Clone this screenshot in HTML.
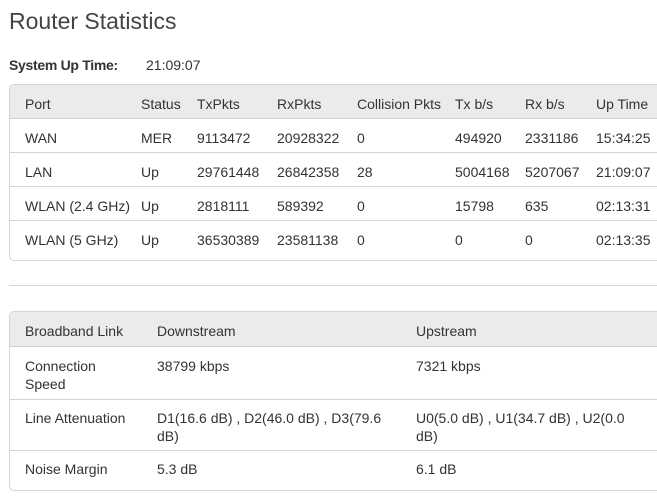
<!DOCTYPE html>
<html><head><style>
body{margin:0;width:657px;height:503px;background:#fff;font-family:"Liberation Sans",sans-serif;color:#333;overflow:hidden;position:relative;font-size:14px}
.a{position:absolute;white-space:nowrap}
.box{position:absolute;border:1px solid #d4d4d4;border-radius:5px;overflow:hidden;background:#fff}
.hd{position:absolute;left:0;right:0;top:0;background:#ebebeb;border-bottom:1px solid #d0d0d0}
.ln{position:absolute;left:0;right:0;height:1px;background:#d4d4d4}
</style></head><body>
<div class="a" style="left:9px;top:8px;font-size:23px;color:#444">Router Statistics</div>
<div class="a" style="left:9px;top:57px;font-weight:bold;font-size:14px;color:#333;letter-spacing:-0.3px">System Up Time:</div>
<div class="a" style="left:146px;top:57px">21:09:07</div>

<div class="box" style="left:9px;top:84px;width:660px;height:175px">
<div class="hd" style="height:33px"></div>
<div class="ln" style="top:67px"></div>
<div class="ln" style="top:101px"></div>
<div class="ln" style="top:135px"></div>
</div>
<div class="a" style="left:25px;top:96px">Port</div><div class="a" style="left:141px;top:96px">Status</div><div class="a" style="left:197px;top:96px">TxPkts</div><div class="a" style="left:277px;top:96px">RxPkts</div><div class="a" style="left:357px;top:96px">Collision Pkts</div><div class="a" style="left:455px;top:96px">Tx b/s</div><div class="a" style="left:525px;top:96px">Rx b/s</div><div class="a" style="left:596px;top:96px">Up Time</div>

<div class="a" style="left:25px;top:130px">WAN</div><div class="a" style="left:141px;top:130px">MER</div><div class="a" style="left:197px;top:130px">9113472</div><div class="a" style="left:277px;top:130px">20928322</div><div class="a" style="left:357px;top:130px">0</div><div class="a" style="left:455px;top:130px">494920</div><div class="a" style="left:525px;top:130px">2331186</div><div class="a" style="left:596px;top:130px">15:34:25</div>

<div class="a" style="left:25px;top:164px">LAN</div><div class="a" style="left:141px;top:164px">Up</div><div class="a" style="left:197px;top:164px">29761448</div><div class="a" style="left:277px;top:164px">26842358</div><div class="a" style="left:357px;top:164px">28</div><div class="a" style="left:455px;top:164px">5004168</div><div class="a" style="left:525px;top:164px">5207067</div><div class="a" style="left:596px;top:164px">21:09:07</div>

<div class="a" style="left:25px;top:198px">WLAN (2.4 GHz)</div><div class="a" style="left:141px;top:198px">Up</div><div class="a" style="left:197px;top:198px">2818111</div><div class="a" style="left:277px;top:198px">589392</div><div class="a" style="left:357px;top:198px">0</div><div class="a" style="left:455px;top:198px">15798</div><div class="a" style="left:525px;top:198px">635</div><div class="a" style="left:596px;top:198px">02:13:31</div>

<div class="a" style="left:25px;top:232px">WLAN (5 GHz)</div><div class="a" style="left:141px;top:232px">Up</div><div class="a" style="left:197px;top:232px">36530389</div><div class="a" style="left:277px;top:232px">23581138</div><div class="a" style="left:357px;top:232px">0</div><div class="a" style="left:455px;top:232px">0</div><div class="a" style="left:525px;top:232px">0</div><div class="a" style="left:596px;top:232px">02:13:35</div>

<div style="position:absolute;left:9px;top:285px;width:648px;height:1px;background:#d4d4d4"></div>

<div class="box" style="left:9px;top:311px;width:660px;height:178px">
<div class="hd" style="height:34px"></div>
<div class="ln" style="top:87px"></div>
<div class="ln" style="top:138px"></div>
</div>
<div class="a" style="left:25px;top:323px">Broadband Link</div><div class="a" style="left:157px;top:323px">Downstream</div><div class="a" style="left:416px;top:323px">Upstream</div>
<div class="a" style="left:25px;top:357px;line-height:18px">Connection<br>Speed</div><div class="a" style="left:157px;top:357px;line-height:18px">38799 kbps</div><div class="a" style="left:416px;top:357px;line-height:18px">7321 kbps</div>
<div class="a" style="left:25px;top:409px;line-height:18px">Line Attenuation</div><div class="a" style="left:157px;top:409px;line-height:18px">D1(16.6 dB) , D2(46.0 dB) , D3(79.6<br>dB)</div><div class="a" style="left:416px;top:409px;line-height:18px">U0(5.0 dB) , U1(34.7 dB) , U2(0.0<br>dB)</div>
<div class="a" style="left:25px;top:461px">Noise Margin</div><div class="a" style="left:157px;top:461px">5.3 dB</div><div class="a" style="left:416px;top:461px">6.1 dB</div>
</body></html>
